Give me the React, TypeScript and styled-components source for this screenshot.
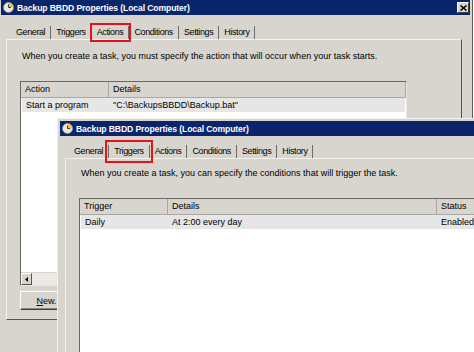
import React from 'react';
import styled, { createGlobalStyle } from 'styled-components';

const GlobalStyle = createGlobalStyle`
  html, body {
    margin: 0;
    padding: 0;
    background: #ffffff;
  }
  body {
    font-family: "Liberation Sans", Arial, sans-serif;
    font-size: 9px;
    color: #000;
  }
`;

const Desktop = styled.div`
  position: relative;
  width: 474px;
  height: 352px;
  overflow: hidden;
  background: #ffffff;
`;

const Window = styled.div<{ $left: number; $top: number; $width: number; $height: number }>`
  position: absolute;
  left: ${(p) => p.$left}px;
  top: ${(p) => p.$top}px;
  width: ${(p) => p.$width}px;
  height: ${(p) => p.$height}px;
  box-sizing: border-box;
  display: flex;
  flex-direction: column;
  padding: 2px;
  background: #d8d5cf;
  border: 1px solid;
  border-color: #f2f0ec #5f5d59 #5f5d59 #f2f0ec;
`;

const TitleBar = styled.div`
  display: flex;
  align-items: center;
  gap: 3px;
  height: 15px;
  padding: 0 1px 0 2px;
  background: #0b256b;
  color: #ffffff;
  font-weight: bold;
  font-size: 8.6px;
  letter-spacing: -0.1px;
  white-space: nowrap;
`;

const TitleText = styled.span`
  flex: 1;
`;

const CloseButton = styled.div`
  display: flex;
  align-items: center;
  justify-content: center;
  width: 10px;
  height: 9px;
  background: #d8d5cf;
  border: 1px solid;
  border-color: #ffffff #404040 #404040 #ffffff;
`;

const TabStrip = styled.div<{ $indent: number; $top: number }>`
  display: flex;
  align-items: flex-end;
  height: 16px;
  margin-top: ${(p) => p.$top}px;
  padding-left: ${(p) => p.$indent}px;
  position: relative;
  z-index: 1;
`;

type Box = [number, number, number, number];

const Tab = styled.div<{ $box?: Box }>`
  position: relative;
  height: 13px;
  line-height: 13px;
  padding: 0 5px;
  border-right: 1px solid #6c6a66;
  letter-spacing: -0.4px;
  white-space: nowrap;
  ${(p) =>
    p.$box &&
    `
    &::after {
      content: '';
      position: absolute;
      top: -${p.$box[0]}px;
      right: -${p.$box[1]}px;
      bottom: -${p.$box[2]}px;
      left: -${p.$box[3]}px;
      border: 2px solid #e3131b;
    }
  `}
`;

const Panel = styled.div<{ $right: number; $height?: number }>`
  display: flex;
  flex-direction: column;
  flex: ${(p) => (p.$height ? '0 0 auto' : '1')};
  height: ${(p) => (p.$height ? `${p.$height}px` : 'auto')};
  box-sizing: border-box;
  margin: 0 ${(p) => p.$right}px 2px 5px;
  border: 1px solid;
  border-color: #f4f2ee #55534f #55534f #f4f2ee;
  min-height: 0;
`;

const Description = styled.div<{ $top: number }>`
  margin: ${(p) => p.$top}px 0 0 15px;
  line-height: 11px;
  white-space: nowrap;
`;

const ListView = styled.div<{ $right: number; $height?: number }>`
  display: flex;
  flex-direction: column;
  margin: 19px ${(p) => p.$right}px 0 13px;
  height: ${(p) => (p.$height ? `${p.$height}px` : 'auto')};
  flex: ${(p) => (p.$height ? '0 0 auto' : '1')};
  box-sizing: border-box;
  background: #ffffff;
  border: 1px solid;
  border-color: #6a6864 #e8e6e2 #e8e6e2 #6a6864;
`;

const ListRow = styled.div<{ $cols: string; $header?: boolean }>`
  display: grid;
  grid-template-columns: ${(p) => p.$cols};
  height: ${(p) => (p.$header ? 15 : 14)}px;
  line-height: ${(p) => (p.$header ? 15 : 14)}px;
  background: ${(p) => (p.$header ? '#d8d5cf' : '#e6e6e6')};
  border-bottom: ${(p) => (p.$header ? '1px solid #a9a7a2' : 'none')};
  margin: ${(p) => (p.$header ? '0' : '0 1px')};
  white-space: nowrap;
  overflow: hidden;
`;

const Cell = styled.div<{ $header?: boolean }>`
  padding-left: 4px;
  overflow: hidden;
  border-right: ${(p) => (p.$header ? '1px solid #a9a7a2' : 'none')};
`;

const ListBody = styled.div`
  flex: 1;
`;

const ScrollBar = styled.div`
  display: flex;
  height: 12px;
  background: #ebe9e5;
  border-top: 1px solid #d8d5cf;
`;

const ScrollArrow = styled.div`
  display: flex;
  align-items: center;
  justify-content: center;
  width: 11px;
  background: #d8d5cf;
  border: 1px solid;
  border-color: #ffffff #55534f #55534f #ffffff;
  box-sizing: border-box;
`;

const ButtonRow = styled.div`
  display: flex;
  margin: 5px 0 0 13px;
`;

const PushButton = styled.div`
  width: 58px;
  height: 19px;
  box-sizing: border-box;
  display: flex;
  align-items: center;
  justify-content: center;
  background: #d8d5cf;
  border: 1px solid;
  border-color: #ffffff #404040 #404040 #ffffff;
  box-shadow: inset -1px -1px 0 #8a8884;
`;

const Hotkey = styled.span`
  text-decoration: underline;
`;

function TaskIcon() {
  return (
    <svg width="11" height="11" viewBox="0 0 11 11">
      <circle cx="5.5" cy="5.5" r="5" fill="#e9e7e2" stroke="#9a9a9a" strokeWidth="0.8" />
      <path d="M5.5 1 A4.5 4.5 0 0 1 10 5.5 L5.5 5.5 Z" fill="#f2c230" />
      <path d="M5.5 2.5 V5.5 H8" stroke="#3a3a3a" strokeWidth="1" fill="none" />
    </svg>
  );
}

function CloseIcon() {
  return (
    <svg width="7" height="6" viewBox="0 0 7 6">
      <path d="M0.5 0.5 L6.5 5.5 M6.5 0.5 L0.5 5.5" stroke="#000" strokeWidth="1.5" />
    </svg>
  );
}

const TAB_NAMES = ['General', 'Triggers', 'Actions', 'Conditions', 'Settings', 'History'];

function Tabs({ selected, indent, top, box }: { selected: string; indent: number; top: number; box: Box }) {
  return (
    <TabStrip $indent={indent} $top={top}>
      {TAB_NAMES.map((name) => (
        <Tab key={name} $box={name === selected ? box : undefined}>
          {name}
        </Tab>
      ))}
    </TabStrip>
  );
}

const TITLE = 'Backup BBDD Properties (Local Computer)';

export default function App() {
  return (
    <>
      <GlobalStyle />
      <Desktop>
        <Window $left={-2} $top={-3} $width={475} $height={356}>
          <TitleBar>
            <TaskIcon />
            <TitleText>{TITLE}</TitleText>
            <CloseButton>
              <CloseIcon />
            </CloseButton>
          </TitleBar>
          <Tabs selected="Actions" indent={10} top={8} box={[3, 3, 3, 2]} />
          <Panel $right={8} $height={281}>
            <Description $top={11}>
              When you create a task, you must specify the action that will occur when your task starts.
            </Description>
            <ListView $right={54} $height={205}>
              <ListRow $header $cols="88px 1fr">
                <Cell $header>Action</Cell>
                <Cell $header>Details</Cell>
              </ListRow>
              <ListRow $cols="87px 1fr">
                <Cell>Start a program</Cell>
                <Cell>"C:\BackupsBBDD\Backup.bat"</Cell>
              </ListRow>
              <ListBody />
              <ScrollBar>
                <ScrollArrow>
                  <svg width="3" height="5" viewBox="0 0 3 5">
                    <path d="M3 0 L0 2.5 L3 5 Z" fill="#000" />
                  </svg>
                </ScrollArrow>
              </ScrollBar>
            </ListView>
            <ButtonRow>
              <PushButton>
                <span>
                  <Hotkey>N</Hotkey>ew...
                </span>
              </PushButton>
            </ButtonRow>
          </Panel>
        </Window>

        <Window $left={57} $top={118} $width={440} $height={260}>
          <TitleBar>
            <TaskIcon />
            <TitleText>{TITLE}</TitleText>
          </TitleBar>
          <Tabs selected="Triggers" indent={9} top={6} box={[5, 4, 5, 4]} />
          <Panel $right={0}>
            <Description $top={9}>
              When you create a task, you can specify the conditions that will trigger the task.
            </Description>
            <ListView $right={-20}>
              <ListRow $header $cols="88px 269px 1fr">
                <Cell $header>Trigger</Cell>
                <Cell $header>Details</Cell>
                <Cell $header>Status</Cell>
              </ListRow>
              <ListRow $cols="87px 269px 1fr">
                <Cell>Daily</Cell>
                <Cell>At 2:00 every day</Cell>
                <Cell>Enabled</Cell>
              </ListRow>
              <ListBody />
            </ListView>
          </Panel>
        </Window>
      </Desktop>
    </>
  );
}
